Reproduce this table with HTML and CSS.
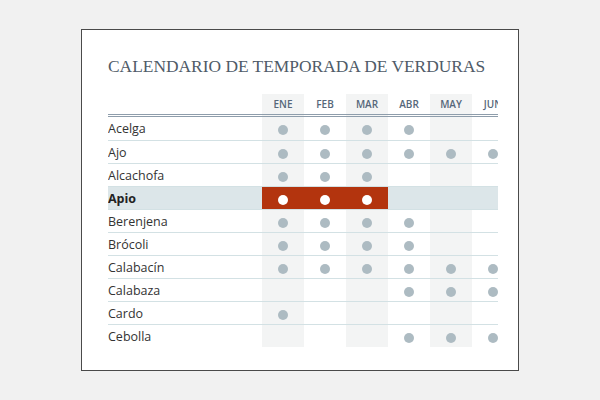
FILE: index.html
```html
<!DOCTYPE html>
<html>
<head>
<meta charset="utf-8">
<link rel="stylesheet" href="styles.css">
</head>
<body>
<div class="card">
  <h1 class="title">CALENDARIO DE TEMPORADA DE VERDURAS</h1>
  <div class="wrap">
    <table class="cal">
      <colgroup>
        <col class="c-name">
        <col class="c-m alt"><col class="c-m"><col class="c-m alt"><col class="c-m"><col class="c-m alt"><col class="c-m">
      </colgroup>
      <thead>
        <tr><th></th><th>ENE</th><th>FEB</th><th>MAR</th><th>ABR</th><th>MAY</th><th>JUN</th></tr>
      </thead>
      <tbody>
        <tr class="first"><td class="n">Acelga</td><td><i></i></td><td><i></i></td><td><i></i></td><td><i></i></td><td></td><td></td></tr>
        <tr><td class="n">Ajo</td><td><i></i></td><td><i></i></td><td><i></i></td><td><i></i></td><td><i></i></td><td><i></i></td></tr>
        <tr><td class="n">Alcachofa</td><td><i></i></td><td><i></i></td><td><i></i></td><td></td><td></td><td></td></tr>
        <tr class="hl"><td class="n">Apio</td><td class="on"><i></i></td><td class="on"><i></i></td><td class="on"><i></i></td><td></td><td></td><td></td></tr>
        <tr><td class="n">Berenjena</td><td><i></i></td><td><i></i></td><td><i></i></td><td><i></i></td><td></td><td></td></tr>
        <tr><td class="n">Brócoli</td><td><i></i></td><td><i></i></td><td><i></i></td><td><i></i></td><td></td><td></td></tr>
        <tr><td class="n">Calabacín</td><td><i></i></td><td><i></i></td><td><i></i></td><td><i></i></td><td><i></i></td><td><i></i></td></tr>
        <tr><td class="n">Calabaza</td><td></td><td></td><td></td><td><i></i></td><td><i></i></td><td><i></i></td></tr>
        <tr><td class="n">Cardo</td><td><i></i></td><td></td><td></td><td></td><td></td><td></td></tr>
        <tr class="last"><td class="n">Cebolla</td><td></td><td></td><td></td><td><i></i></td><td><i></i></td><td><i></i></td></tr>
      </tbody>
    </table>
  </div>
</div>
</body>
</html>
```
FILE: styles.css
```css
html, body {
  margin: 0;
  padding: 0;
  background: #f1f1f1;
}
body {
  padding: 29px 0 0 81px;
}
.card {
  box-sizing: border-box;
  width: 438px;
  height: 342px;
  background: #fff;
  border: 1px solid #4a4a4a;
  padding: 25px 0 0 26px;
}
.title {
  margin: 0;
  font-family: "Liberation Serif", serif;
  font-weight: normal;
  font-size: 17.4px;
  line-height: 22px;
  color: #4f5b68;
  white-space: nowrap;
}
.wrap {
  margin-top: 17px;
  width: 390px;
  overflow: hidden;
}
.cal {
  border-collapse: collapse;
  table-layout: fixed;
  width: 406px;
  font-family: "Open Sans", sans-serif;
}
.c-name { width: 154px; }
.c-m { width: 42px; }
.c-m.alt { background: #f3f4f4; }
.cal th {
  height: 20px;
  padding: 0;
  font-size: 10px;
  font-weight: 600;
  color: #56677a;
  text-align: center;
  vertical-align: middle;
  border-bottom: 3px double #8e9dab;
}
.cal td {
  height: 22px;
  padding: 0;
  border-bottom: 1px solid #d3e1e4;
  text-align: center;
  vertical-align: middle;
}
.cal tr.first td { height: 23px; }
.cal tr.last td { border-bottom: none; }
.cal td.n {
  text-align: left;
  font-size: 12.5px;
  color: #333;
}
.cal i {
  display: inline-block;
  width: 10px;
  height: 10px;
  border-radius: 50%;
  background: #adbbc2;
  vertical-align: middle;
}
.cal tr.hl td { background: #dce6e9; }
.cal tr.hl td.n { font-weight: bold; color: #222; }
.cal tr.hl td.on { background: #b3340e; }
.cal tr.hl td.on i { background: #fff; }
```
